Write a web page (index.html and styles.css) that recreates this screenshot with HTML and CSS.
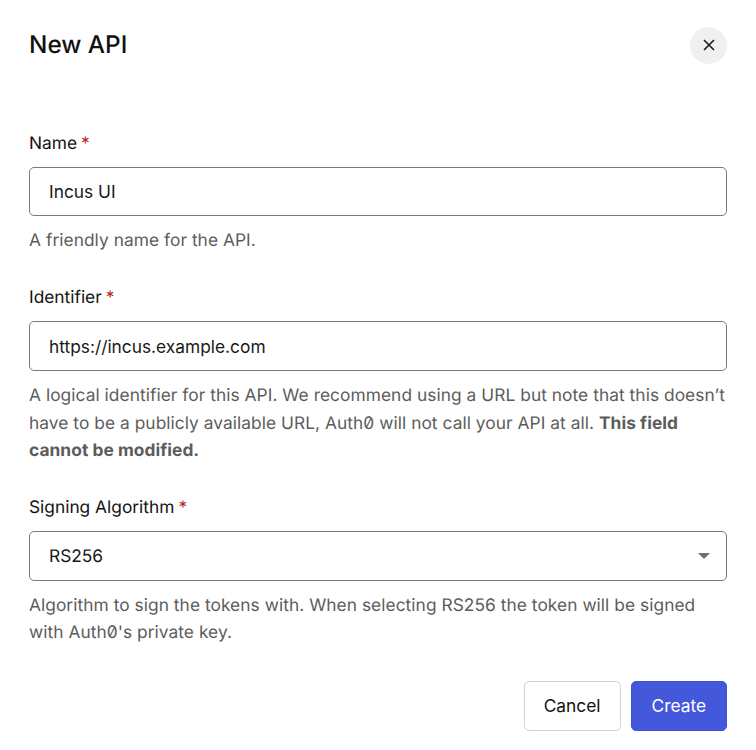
FILE: index.html
```html
<!DOCTYPE html>
<html lang="en">
<head>
  <meta charset="UTF-8">
  <meta name="viewport" content="width=device-width, initial-scale=1.0">
  <title>New API</title>
  <link rel="stylesheet" href="styles.css">
</head>
<body>
  <div class="dialog">
    <div class="dialog-header">
      <h1>New API</h1>
      <button class="close-btn" aria-label="Close">
        <svg width="12" height="12" viewBox="0 0 12 12"><path d="M1 1L11 11M11 1L1 11" stroke="#191919" stroke-width="1.6" fill="none"/></svg>
      </button>
    </div>

    <form class="dialog-form">
      <!-- Name -->
      <div class="field field-name">
        <label class="field-label" for="name">Name<span class="required">*</span></label>
        <input id="name" class="field-input" type="text" value="Incus UI">
        <p class="field-help">A friendly name for the API.</p>
      </div>

      <!-- Identifier -->
      <div class="field field-identifier">
        <label class="field-label" for="identifier">Identifier<span class="required">*</span></label>
        <input id="identifier" class="field-input" type="text" value="https://incus.example.com">
        <p class="field-help">A logical identifier for this API. We recommend using a URL but note that this doesn’t have to be a publicly available URL, Auth0 will not call your API at all. <strong>This field cannot be modified.</strong></p>
      </div>

      <!-- Signing Algorithm -->
      <div class="field">
        <label class="field-label" for="algorithm">Signing Algorithm<span class="required">*</span></label>
        <div class="field-input field-select" id="algorithm">
          <span>RS256</span>
          <span class="select-arrow"></span>
        </div>
        <p class="field-help">Algorithm to sign the tokens with. When selecting RS256 the token will be signed with Auth0's private key.</p>
      </div>

      <div class="dialog-actions">
        <button type="button" class="btn btn-cancel">Cancel</button>
        <button type="button" class="btn btn-create">Create</button>
      </div>
    </form>
  </div>
</body>
</html>
```

FILE: styles.css
```css
* {
  margin: 0;
  padding: 0;
  box-sizing: border-box;
}

body {
  width: 756px;
  height: 750px;
  overflow: hidden;
  font-family: Inter, "Liberation Sans", sans-serif;
  font-feature-settings: "zero";
  text-rendering: geometricPrecision;
  background: #ffffff;
  color: #191919;
}

.dialog {
  padding: 27px 29px 0 29px;
}

.dialog-header {
  display: flex;
  justify-content: space-between;
  align-items: center;
  height: 37px;
  margin-bottom: 67px;
}

.dialog-header h1 {
  font-size: 24.3px;
  font-weight: 500;
  line-height: 35px;
  margin-bottom: 2px;
  color: #111111;
}

.close-btn {
  display: flex;
  align-items: center;
  justify-content: center;
  width: 37px;
  height: 37px;
  padding-bottom: 1px;
  border: none;
  border-radius: 50%;
  background: #f0f0f0;
}

.field {
  margin-bottom: 31px;
}

.field-identifier {
  margin-bottom: 30px;
}

.field-label {
  display: block;
  font-size: 17.33px;
  font-weight: 400;
  line-height: 26px;
  margin-bottom: 10px;
  color: #111111;
}

.required {
  color: #b3261e;
  margin-left: 4px;
}

.field-input {
  display: block;
  width: 100%;
  height: 50px;
  padding: 0 19px;
  border: 1px solid #7a7a7a;
  border-radius: 5px;
  font-family: inherit;
  font-feature-settings: inherit;
  font-size: 17.33px;
  color: #191919;
  background: #ffffff;
}

.field-name .field-input {
  height: 49px;
}

.field-select {
  display: flex;
  align-items: center;
  justify-content: space-between;
  padding-top: 1px;
}

.select-arrow {
  width: 0;
  height: 0;
  margin-right: -3px;
  border-left: 6px solid transparent;
  border-right: 6px solid transparent;
  border-top: 6px solid #6f6f6f;
}

.field-help {
  margin-top: 11px;
  font-size: 17.33px;
  letter-spacing: 0.05px;
  line-height: 27.4px;
  color: #5c5c5c;
}

.field-help strong {
  font-weight: 700;
}

.dialog-actions {
  display: flex;
  justify-content: flex-end;
  gap: 10px;
  margin-top: 35px;
}

.btn {
  height: 50px;
  padding: 0 19px 1px;
  border-radius: 5px;
  font-family: inherit;
  font-size: 17.33px;
  font-weight: 400;
}

.btn-cancel {
  border: 1px solid #d2d2d2;
  background: #ffffff;
  color: #111111;
}

.btn-create {
  padding: 0 20px 1px;
  border: 1px solid #3c53d6;
  background: #4358db;
  color: #ffffff;
}
```
